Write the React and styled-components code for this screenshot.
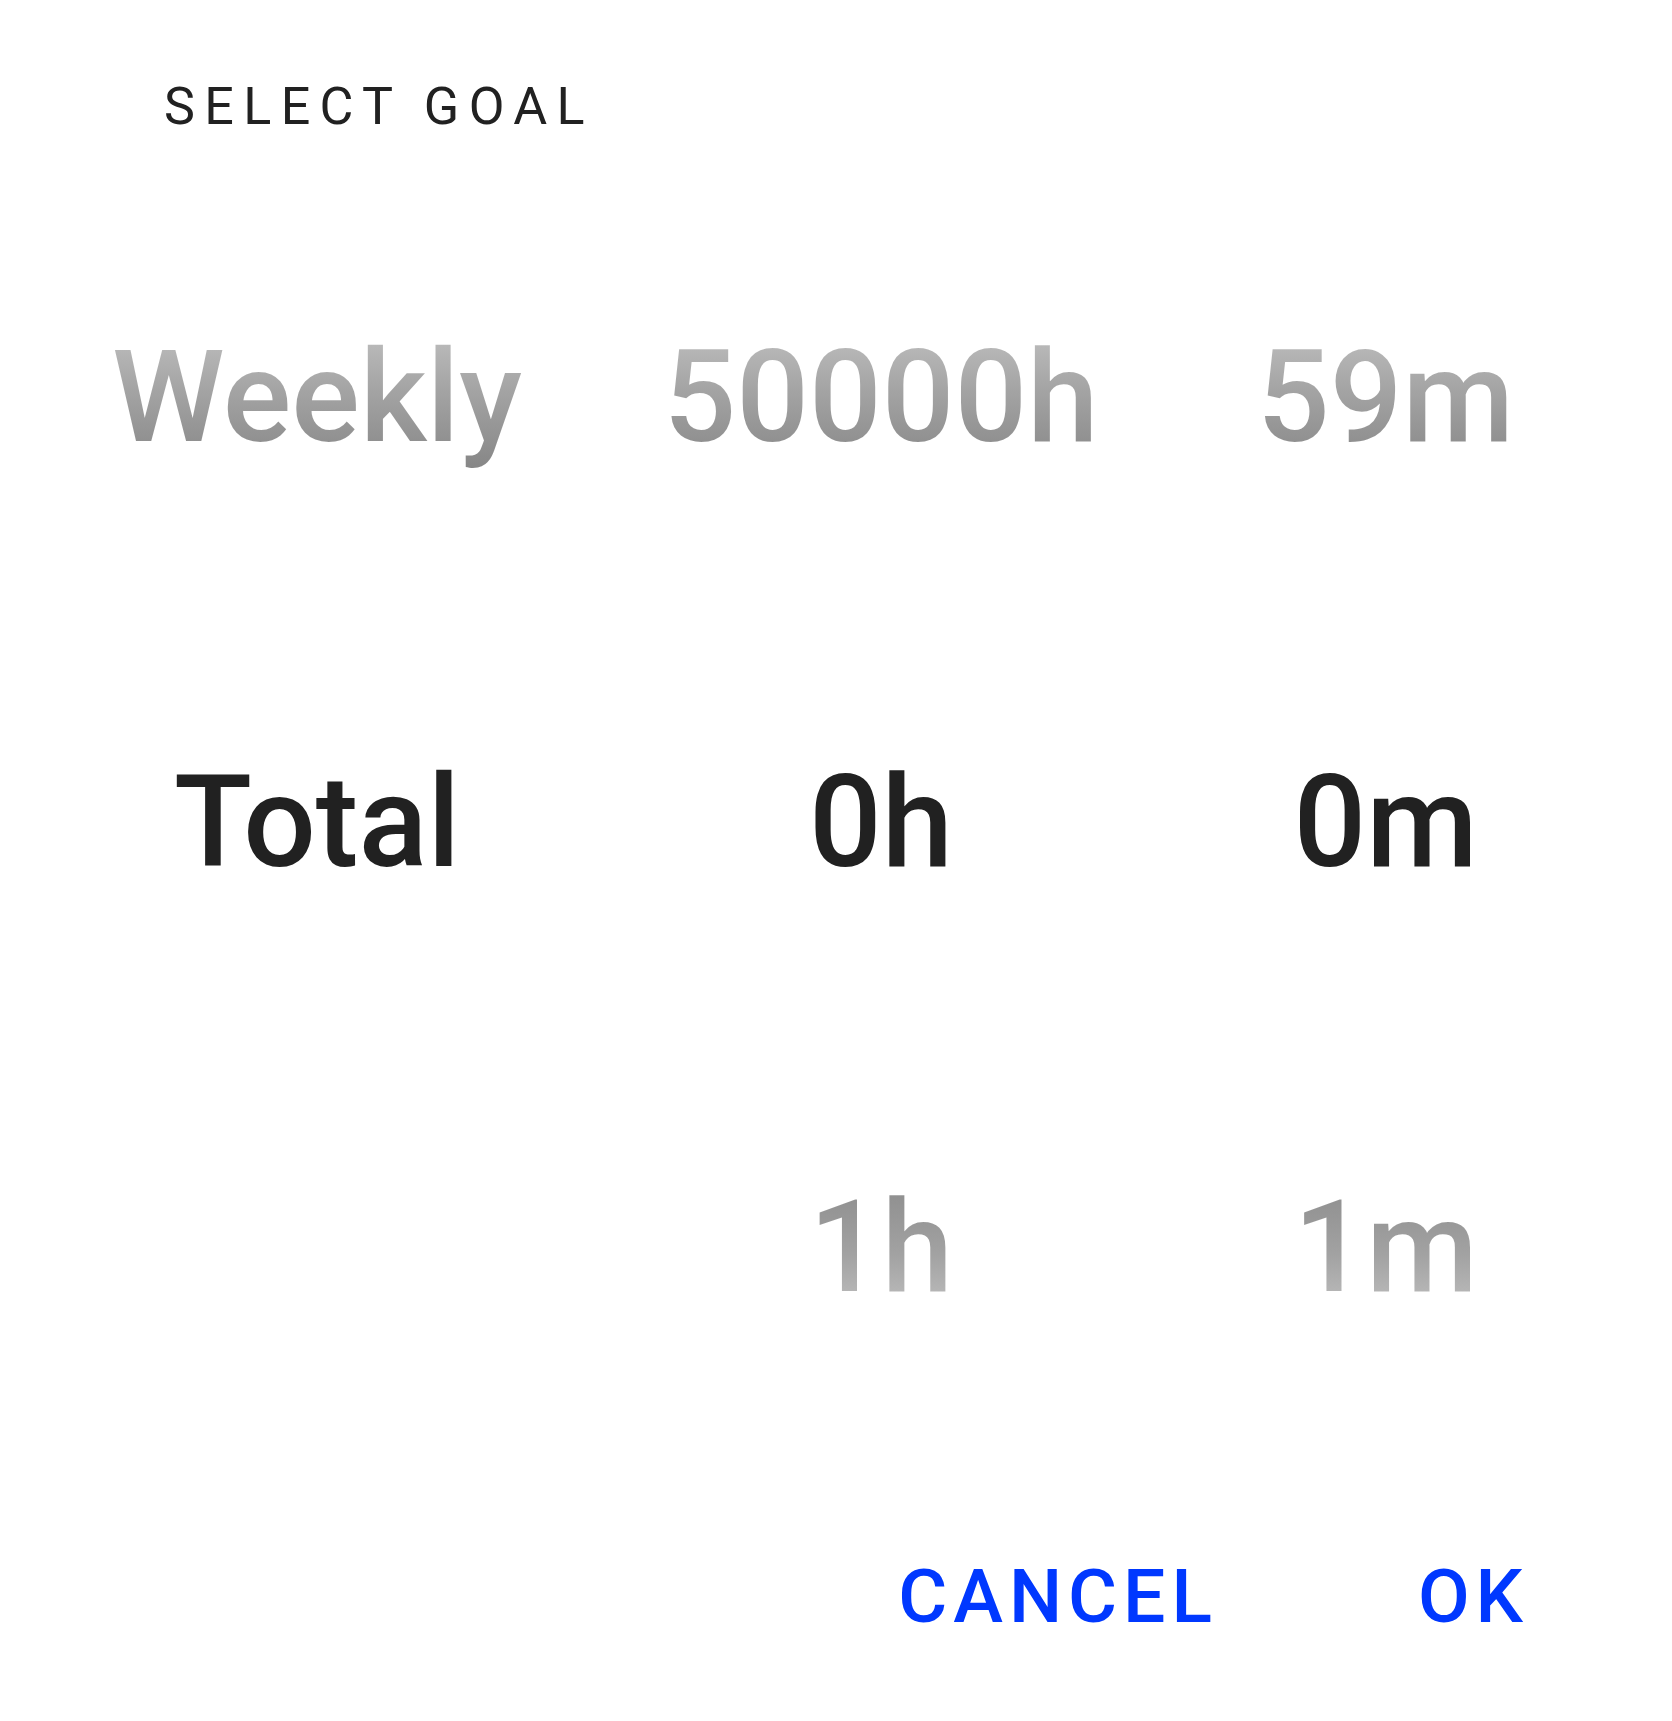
import React from 'react'
import styled, { createGlobalStyle, css } from 'styled-components'

const GlobalStyle = createGlobalStyle`
  html, body {
    margin: 0;
    padding: 0;
    background: #ffffff;
  }
  body {
    font-family: Roboto, "Noto Sans", sans-serif;
  }
`

const Dialog = styled.div`
  width: 1672px;
  height: 1721px;
  background: #ffffff;
  display: flex;
  flex-direction: column;
  box-sizing: border-box;
`

const Title = styled.h1`
  margin: 0;
  padding: 81px 0 0 164px;
  font-family: Roboto, sans-serif;
  font-weight: 400;
  font-size: 52px;
  line-height: 52px;
  letter-spacing: 9.4px;
  color: #212121;
`

const Picker = styled.div`
  margin-top: 51px;
  display: grid;
  grid-template-columns: 634px 494px 515px;
`

const Wheel = styled.div`
  display: flex;
  flex-direction: column;
`

const Slot = styled.div`
  height: 425px;
  display: flex;
  align-items: center;
  justify-content: center;
`

/* as linhas de cima e de baixo ficam cinzentas e somem para a borda */
const fades = {
  up: css`
    background: linear-gradient(to bottom, #c2c2c2 0%, #a4a4a4 45%, #858585 100%);
    -webkit-background-clip: text;
    background-clip: text;
    color: transparent;
  `,
  down: css`
    background: linear-gradient(to bottom, #8a8a8a 0%, #a2a2a2 55%, #c4c4c4 100%);
    -webkit-background-clip: text;
    background-clip: text;
    color: transparent;
  `,
  none: css`
    color: #212121;
  `,
}

const Value = styled.span`
  display: inline-block;
  font-family: Roboto, sans-serif;
  font-weight: 500;
  font-size: 128px;
  line-height: 150px;
  ${(p) => fades[p.$fade || 'none']}
`

const Actions = styled.div`
  margin-top: 99px;
  display: flex;
  justify-content: flex-end;
  gap: 200px;
  padding-right: 143px;
`

const Action = styled.button`
  background: none;
  border: none;
  padding: 0;
  cursor: pointer;
  font-family: Roboto, sans-serif;
  font-weight: 500;
  font-size: 75px;
  line-height: 76px;
  letter-spacing: 6px;
  color: #0038ff;
`

const columns = [
  ['Weekly', 'Total', ''],
  ['50000h', '0h', '1h'],
  ['59m', '0m', '1m'],
]

const fadeFor = ['up', 'none', 'down']

const App = () => {
  return (
    <Dialog>
      <GlobalStyle />
      <Title>SELECT GOAL</Title>
      <Picker>
        {columns.map((col, i) => (
          <Wheel key={i}>
            {col.map((label, j) => (
              <Slot key={j}>
                {label && <Value $fade={fadeFor[j]}>{label}</Value>}
              </Slot>
            ))}
          </Wheel>
        ))}
      </Picker>
      <Actions>
        <Action>CANCEL</Action>
        <Action>OK</Action>
      </Actions>
    </Dialog>
  )
}

export default App
